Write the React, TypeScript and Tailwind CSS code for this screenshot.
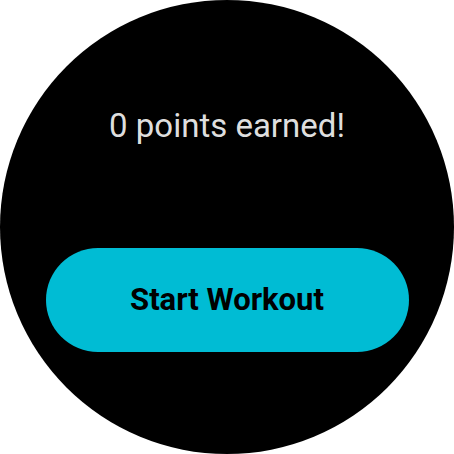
export default function App() {
  return (
    <div className="h-[454px] w-[454px] bg-white">
      <div
        className="flex h-full w-full flex-col items-center rounded-full bg-black"
        style={{ fontFamily: "Roboto, 'Liberation Sans', sans-serif" }}
      >
        <p className="mt-[106px] text-[33px] leading-[40px] text-[#dedede]">0 points earned!</p>
        <button className="mt-[102px] h-[104px] w-[363px] rounded-full bg-[#00bcd4] text-[31px] font-bold text-black">
          Start Workout
        </button>
      </div>
    </div>
  );
}
